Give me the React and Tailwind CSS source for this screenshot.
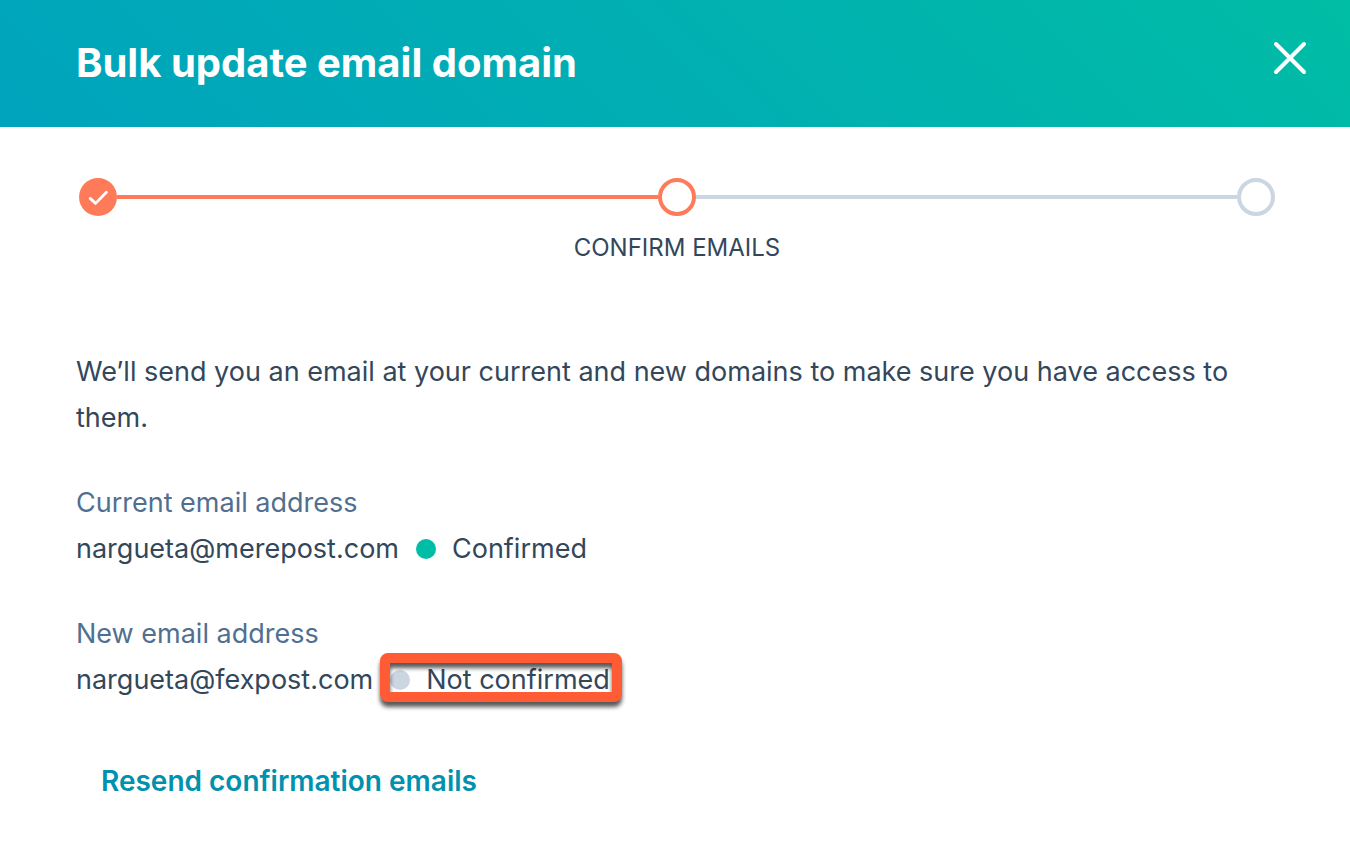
const steps = [
  { name: "Enter domains", state: "done" },
  { name: "Confirm emails", state: "current" },
  { name: "Finish", state: "upcoming" },
];

function StepMarker({ step }) {
  if (step.state === "done") {
    return (
      <li aria-label={step.name} className="flex size-[38px] shrink-0 items-center justify-center rounded-full bg-[#ff7a59]">
        <svg viewBox="0 0 20 16" className="h-4 w-5" fill="none" stroke="#fff" strokeWidth="2.8" strokeLinecap="round" strokeLinejoin="round" aria-hidden="true">
          <path d="M2.2 9.4 7.6 14.4 18.4 3.2" />
        </svg>
      </li>
    );
  }
  if (step.state === "current") {
    return (
      <li aria-current="step" className="relative flex size-[38px] shrink-0 justify-center rounded-full border-4 border-[#ff7a59] bg-white">
        <span className="absolute top-[50px] text-[24px] leading-[32px] whitespace-nowrap uppercase">{step.name}</span>
      </li>
    );
  }
  return <li aria-label={step.name} className="size-[38px] shrink-0 rounded-full border-4 border-[#cbd6e2] bg-white" />;
}

function Email({ label, address, status, dot, marked }) {
  return (
    <div>
      <dt className="text-[#516f90]">{label}</dt>
      <dd className="flex items-center gap-[17px]">
        <span>{address}</span>
        <span className="relative flex items-center gap-4">
          <span className={`size-5 rounded-full ${dot}`} />
          {status}
          {marked && (
            <span className="absolute top-[-4px] right-[-12px] bottom-[1px] left-[-10px] rounded-lg border-10 border-[#ff5c35] drop-shadow-[0_5px_2px_rgba(0,0,0,0.65)]" />
          )}
        </span>
      </dd>
    </div>
  );
}

export default function App() {
  return (
    <div role="dialog" aria-labelledby="title" className="min-h-screen bg-white font-['Inter','Noto_Sans',sans-serif] text-[#33475b]">
      <header className="flex items-center justify-between bg-linear-[44deg,#00a4bd,#00afb2_50%,#00bda5] pt-8 pr-[42px] pb-[34px] pl-[76px] text-white">
        <h1 id="title" className="text-[40px] leading-[61px] font-bold">Bulk update email domain</h1>
        <button type="button" aria-label="Close" className="mb-2.5">
          <svg viewBox="0 0 36 36" className="size-9" stroke="currentColor" strokeWidth="4" strokeLinecap="round" aria-hidden="true">
            <path d="M4 4 32 32M32 4 4 32" />
          </svg>
        </button>
      </header>
      <main className="pr-[75px] pl-[76px] text-[27px] leading-[46px]">
        <ol className="flex items-center pt-[51px] pl-[3px]">
          <StepMarker step={steps[0]} />
          <li aria-hidden="true" className="h-1 flex-1 bg-[#ff7a59]" />
          <StepMarker step={steps[1]} />
          <li aria-hidden="true" className="h-1 flex-1 bg-[#cbd6e2]" />
          <StepMarker step={steps[2]} />
        </ol>
        <p className="mt-[133px]">
          We’ll send you an email at your current and new domains to make sure you have access to them.
        </p>
        <dl className="mt-[39px] flex flex-col gap-[39px]">
          <Email label="Current email address" address="nargueta@merepost.com" status="Confirmed" dot="bg-[#00bda5]" />
          <Email label="New email address" address="nargueta@fexpost.com" status="Not confirmed" dot="bg-[#cbd6e2]" marked />
        </dl>
        <button type="button" className="mt-[55px] ml-[25px] text-[28px] font-semibold text-[#0091ae]">
          Resend confirmation emails
        </button>
      </main>
    </div>
  );
}
